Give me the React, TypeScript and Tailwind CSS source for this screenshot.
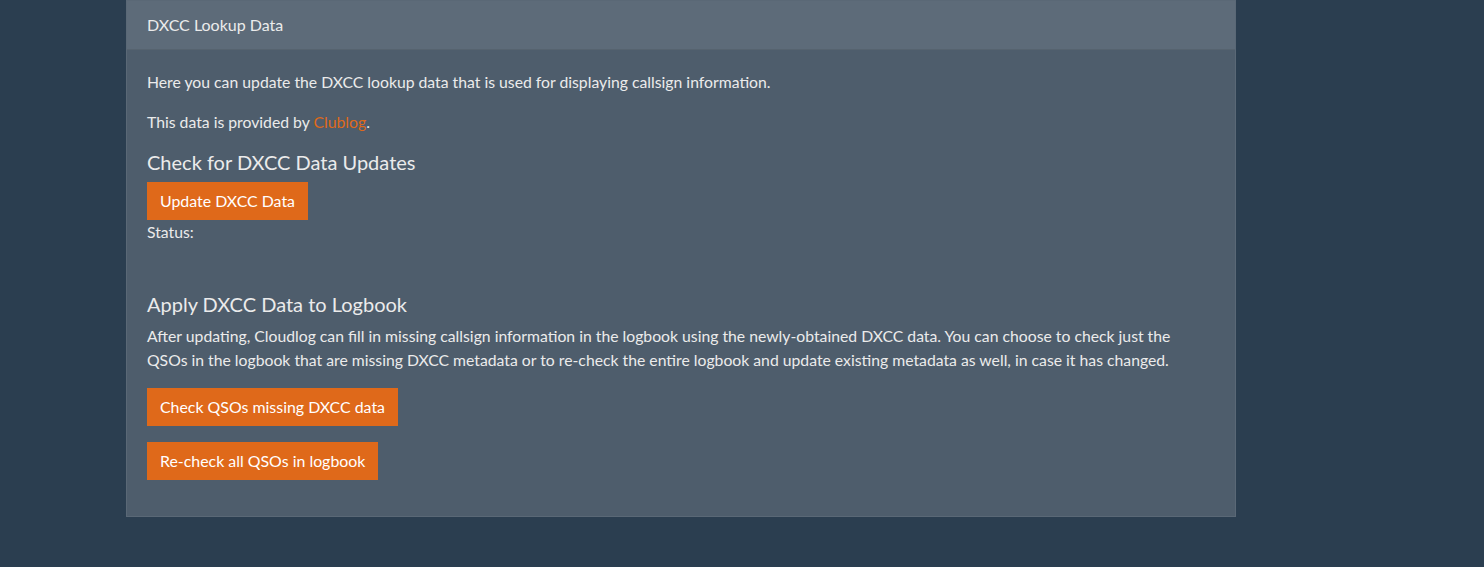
export default function App() {
  const btn =
    "inline-block bg-[#df691a] border border-[#df691a] px-3 py-1.5 text-[15.9px] leading-6 text-white";

  return (
    <div
      className="min-h-[567px] bg-[#2b3e50] text-[#ebebeb] text-[15.75px] leading-6"
      style={{ fontFamily: "Lato, 'Liberation Sans', sans-serif" }}
    >
      <div className="ml-[126px] w-[1110px] border border-[#5a6876] bg-[#4e5d6c]">
        {/* Card header */}
        <div className="bg-[#5d6b79] px-5 py-3 text-base leading-6 border-b border-[#56636f]">
          DXCC Lookup Data
        </div>

        {/* Card body */}
        <div className="p-5">
          <p className="mb-4">
            Here you can update the DXCC lookup data that is used for displaying callsign information.
          </p>
          <p className="mb-4">
            This data is provided by <a className="text-[#df691a]">Clublog</a>.
          </p>

          <h5 className="text-xl leading-6 mb-2">Check for DXCC Data Updates</h5>
          <button className={btn}>Update DXCC Data</button>
          <div>Status:</div>

          <h5 className="text-xl leading-6 mb-2 mt-12">Apply DXCC Data to Logbook</h5>
          <p className="mb-4 max-w-[1050px]">
            After updating, Cloudlog can fill in missing callsign information in the logbook using the
            newly-obtained DXCC data. You can choose to check just the QSOs in the logbook that are missing
            DXCC metadata or to re-check the entire logbook and update existing metadata as well, in case it
            has changed.
          </p>
          <div className="mb-4">
            <button className={btn}>Check QSOs missing DXCC data</button>
          </div>
          <div className="mb-4">
            <button className={btn}>Re-check all QSOs in logbook</button>
          </div>
        </div>
      </div>
    </div>
  );
}
